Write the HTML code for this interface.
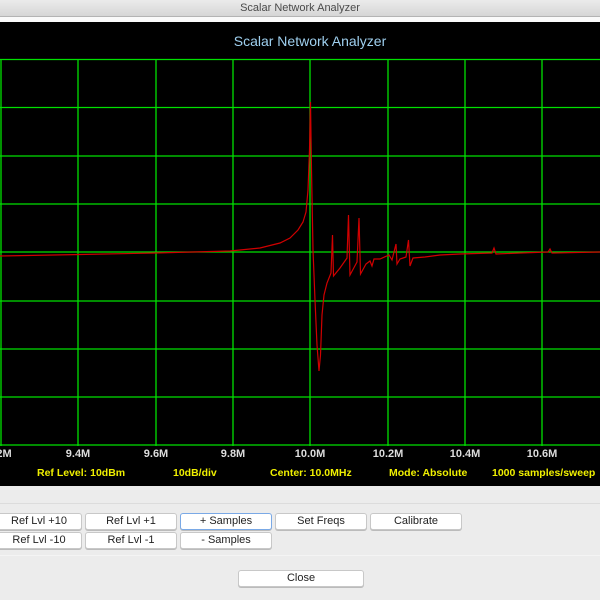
<!DOCTYPE html>
<html><head><style>
body{margin:0;width:600px;height:600px;overflow:hidden;background:#ececec;font-family:"Liberation Sans",sans-serif;position:relative}
.tb{position:absolute;left:0;top:0;width:600px;height:16px;background:linear-gradient(#ebebeb,#d6d6d6);border-bottom:1px solid #b4b4b4;font-size:11px;color:#4a4a4a;text-align:center;line-height:16px}
.btn{position:absolute;height:15px;background:#fff;border:1px solid #c8c8c8;border-radius:3px;font-size:11px;text-align:center;line-height:15px;color:#222;box-shadow:0 1px 0 #bbb}
.ax{position:absolute;top:448px;font-size:11px;color:#ddd;font-weight:bold;transform:translateX(-50%)}
.yl{position:absolute;top:467px;font-size:10.5px;color:#f0f000;font-weight:bold}
</style></head><body>
<div class="tb">Scalar Network Analyzer</div>
<div style="position:absolute;left:0;top:17px;width:600px;height:5px;background:#fafafa"></div>
<div style="position:absolute;left:0;top:22px;width:600px;height:464px;background:#000"></div>
<div style="position:absolute;left:0;top:33px;width:620px;text-align:center;font-size:14px;color:#9fd0ef">Scalar Network Analyzer</div>
<svg style="position:absolute;left:0;top:0" width="600" height="600">
<g stroke="#00e000" stroke-width="1.3">
<line x1="1" y1="59" x2="1" y2="446"/><line x1="78" y1="59" x2="78" y2="446"/><line x1="156" y1="59" x2="156" y2="446"/><line x1="233" y1="59" x2="233" y2="446"/><line x1="310" y1="59" x2="310" y2="446"/><line x1="388" y1="59" x2="388" y2="446"/><line x1="465" y1="59" x2="465" y2="446"/><line x1="542" y1="59" x2="542" y2="446"/>
<line x1="0" y1="59.5" x2="600" y2="59.5"/><line x1="0" y1="107.5" x2="600" y2="107.5"/><line x1="0" y1="156" x2="600" y2="156"/><line x1="0" y1="204" x2="600" y2="204"/><line x1="0" y1="252" x2="600" y2="252"/><line x1="0" y1="301" x2="600" y2="301"/><line x1="0" y1="349" x2="600" y2="349"/><line x1="0" y1="397" x2="600" y2="397"/><line x1="0" y1="445" x2="600" y2="445"/>
</g>
<polyline fill="none" stroke="#d00000" stroke-width="1.2" points="0,256 80,254.5 155,253 230,251 260,248 280,243 290,238 298,230 303,222 306,212 308,190 309.5,150 310.5,102 311.5,170 313,250 315,300 317,345 319,371 320.5,355 322,315 324,295 327,283 331,273 332.5,235 333.5,276 340,268 347,258 348.5,215 350,275 357,262 359,218 360.5,274 366,264 370,261 372,266 374,259 380,259 389,255 392,260 396,244 397,264 400,259 406,257 408.5,240 410,266 413,258 425,257 440,255 460,254 492,253 494,248 496,254 520,253 548,252 550,249 552,253 600,252"/>
</svg>
<div class="ax" style="left:4px">2M</div>
<div class="ax" style="left:78px">9.4M</div>
<div class="ax" style="left:156px">9.6M</div>
<div class="ax" style="left:233px">9.8M</div>
<div class="ax" style="left:310px">10.0M</div>
<div class="ax" style="left:388px">10.2M</div>
<div class="ax" style="left:465px">10.4M</div>
<div class="ax" style="left:542px">10.6M</div>
<div class="yl" style="left:37px">Ref Level: 10dBm</div>
<div class="yl" style="left:173px">10dB/div</div>
<div class="yl" style="left:270px">Center: 10.0MHz</div>
<div class="yl" style="left:389px">Mode: Absolute</div>
<div class="yl" style="left:492px">1000 samples/sweep</div>
<div style="position:absolute;left:0;top:503px;width:600px;height:1px;background:#dcdcdc"></div>
<div style="position:absolute;left:0;top:555px;width:600px;height:1px;background:#f4f4f4"></div>
<div class="btn" style="left:-4px;top:513px;width:84px">Ref Lvl +10</div>
<div class="btn" style="left:85px;top:513px;width:90px">Ref Lvl +1</div>
<div class="btn" style="left:180px;top:513px;width:90px;border-color:#7aa9e6">+ Samples</div>
<div class="btn" style="left:275px;top:513px;width:90px">Set Freqs</div>
<div class="btn" style="left:370px;top:513px;width:90px">Calibrate</div>
<div class="btn" style="left:-4px;top:532px;width:84px">Ref Lvl -10</div>
<div class="btn" style="left:85px;top:532px;width:90px">Ref Lvl -1</div>
<div class="btn" style="left:180px;top:532px;width:90px">- Samples</div>
<div class="btn" style="left:238px;top:570px;width:124px">Close</div>
</body></html>
